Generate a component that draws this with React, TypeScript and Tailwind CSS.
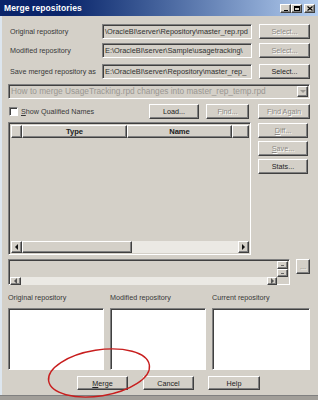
import React from "react";

const raised =
  "border border-t-white border-l-white border-r-[#404040] border-b-[#404040] shadow-[inset_-1px_-1px_0_#808080]";
const sunken =
  "border border-t-[#808080] border-l-[#808080] border-r-white border-b-white shadow-[inset_1px_1px_0_#404040]";
const dis = "text-[#8d8a85] [text-shadow:1px_1px_0_#ffffff]";
const en = "text-[#222222]";

function Btn({
  children,
  size,
  disabled,
}: {
  children: React.ReactNode;
  size: string;
  disabled?: boolean;
}) {
  return (
    <div
      className={`flex items-center justify-center shrink-0 bg-[#d4d0c8] leading-none ${raised} ${size} ${
        disabled ? dis : en
      }`}
    >
      {children}
    </div>
  );
}

function Tri({ dir, color = "#111" }: { dir: "l" | "r" | "d"; color?: string }) {
  const pts =
    dir === "l" ? "3,0 3,6 0,3" : dir === "r" ? "0,0 0,6 3,3" : "0,0 6,0 3,3";
  const w = dir === "d" ? 6 : 3;
  const h = dir === "d" ? 3 : 6;
  return (
    <svg width={w} height={h} viewBox={`0 0 ${w} ${h}`}>
      <polygon points={pts} fill={color} />
    </svg>
  );
}

function Field({ text }: { text: string }) {
  return (
    <div
      className={`w-[150px] h-[15px] shrink-0 bg-[#d4d0c8] ${sunken} flex items-center overflow-hidden whitespace-nowrap pl-[2px] text-[#303030] text-[7.4px]`}
    >
      {text}
    </div>
  );
}

function Row({
  label,
  text,
  selDisabled,
  mt,
}: {
  label: string;
  text: string;
  selDisabled?: boolean;
  mt: string;
}) {
  return (
    <div className={`flex items-center ${mt}`}>
      <div className="w-[92px] ml-[2px] text-[#383838] whitespace-nowrap">{label}</div>
      <Field text={text} />
      <div className="ml-[7px]">
        <Btn size="w-[51px] h-[15px]" disabled={selDisabled}>
          Select...
        </Btn>
      </div>
    </div>
  );
}

export default function App() {
  return (
    <div className="relative w-[318px] h-[400px] overflow-hidden bg-[#d4d0c8] font-['Liberation_Sans',Arial,sans-serif] text-[7.2px] leading-none flex flex-col">
      {/* title bar */}
      <div className="h-[16px] shrink-0 flex items-center bg-gradient-to-r from-[#0a246a] from-20% to-[#b6cff0] pl-[4px] pr-[3px]">
        <div className="text-white font-bold text-[8.5px] tracking-[0.1px]">Merge repositories</div>
        <div className="ml-auto flex items-center">
          <div className={`w-[11px] h-[9px] bg-[#d4d0c8] ${raised} flex items-end justify-center pb-[1px]`}>
            <div className="w-[4px] h-[1px] bg-black" />
          </div>
          <div className={`w-[11px] h-[9px] bg-[#d4d0c8] ${raised} flex items-center justify-center`}>
            <div className="w-[6px] h-[5px] border border-black border-t-2" />
          </div>
          <div className={`ml-[2px] w-[11px] h-[9px] bg-[#d4d0c8] ${raised} flex items-center justify-center`}>
            <svg width="6" height="5" viewBox="0 0 6 5">
              <path d="M0.5 0.5 L5.5 4.5 M5.5 0.5 L0.5 4.5" stroke="#000" strokeWidth="1.2" />
            </svg>
          </div>
        </div>
      </div>

      <div className="flex flex-1">
        <div className="w-[2px] bg-[#dde6ef] shrink-0" />
        <div className="flex-1 flex flex-col pl-[6px] pr-[8px]">
          <Row
            mt="mt-[8px]"
            label="Original repository"
            text="\OracleBI\server\Repository\master_rep.rpd"
            selDisabled
          />
          <Row
            mt="mt-[4px]"
            label="Modified repository"
            text="E:\OracleBI\server\Sample\usagetracking\"
            selDisabled
          />
          <Row
            mt="mt-[6px]"
            label="Save merged repository as"
            text="E:\OracleBI\server\Repository\master_rep_"
          />

          {/* combobox */}
          <div
            className={`mt-[5px] w-[302px] h-[15px] bg-[#d4d0c8] ${sunken} flex items-center pl-[2px] pr-[1px] whitespace-nowrap`}
          >
            <span className="text-[#9a9792] text-[8.3px]">
              How to merge UsageTracking.rpd changes into master_rep_temp.rpd
            </span>
            <div className={`ml-auto w-[11px] h-[11px] bg-[#d4d0c8] ${raised} flex items-center justify-center`}>
              <Tri dir="d" color="#9a9792" />
            </div>
          </div>

          {/* middle section */}
          <div className="mt-[5px] flex">
            <div className="w-[243px] flex flex-col">
              <div className="flex items-center h-[15px]">
                <div className={`ml-[1px] w-[9px] h-[9px] bg-white ${sunken}`} />
                <div className="ml-[3px] text-[#383838]">
                  <span className="underline">S</span>how Qualified Names
                </div>
                <div className="ml-auto">
                  <Btn size="w-[50px] h-[15px]">Load...</Btn>
                </div>
                <div className="ml-[7px] mr-[2px]">
                  <Btn size="w-[43px] h-[15px]" disabled>
                    Find...
                  </Btn>
                </div>
              </div>
              {/* table */}
              <div className={`mt-[3px] h-[133px] ${sunken} bg-[#d4d0c8] flex flex-col p-[1px] pl-[2px] pt-[2px]`}>
                <div className="h-[13px] flex font-bold text-[#222] text-[7.6px]">
                  <div className={`w-[11px] ${raised} bg-[#d4d0c8]`} />
                  <div className={`w-[105px] ${raised} bg-[#d4d0c8] flex items-center justify-center`}>Type</div>
                  <div className={`w-[105px] ${raised} bg-[#d4d0c8] flex items-center justify-center`}>Name</div>
                  <div className={`flex-1 ${raised} bg-[#d4d0c8]`} />
                </div>
                <div className="flex-1" />
                <div className="h-[12px] flex">
                  <div className={`w-[11px] ${raised} bg-[#d4d0c8] flex items-center justify-center`}>
                    <Tri dir="l" />
                  </div>
                  <div className={`w-[110px] ${raised} bg-[#d4d0c8]`} />
                  <div className="flex-1 bg-[#ebe9e4]" />
                  <div className={`w-[11px] ${raised} bg-[#d4d0c8] flex items-center justify-center`}>
                    <Tri dir="r" />
                  </div>
                </div>
              </div>
            </div>
            <div className="ml-[7px] w-[52px] flex flex-col">
              <Btn size="w-[52px] h-[15px]" disabled>
                Find Again
              </Btn>
              <div className="mt-[4px]">
                <Btn size="w-[50px] h-[15px]" disabled>
                  <span className="underline">D</span>iff...
                </Btn>
              </div>
              <div className="mt-[3px]">
                <Btn size="w-[50px] h-[15px]" disabled>
                  <span className="underline">S</span>ave...
                </Btn>
              </div>
              <div className="mt-[3px]">
                <Btn size="w-[50px] h-[15px]">Stats...</Btn>
              </div>
            </div>
          </div>

          {/* second box */}
          <div className="mt-[4px] flex items-start">
            <div className={`w-[282px] h-[26px] ${sunken} bg-[#d4d0c8] flex flex-col pl-[1px] pt-[1px]`}>
              <div className="flex-1 flex">
                <div className="flex-1" />
                <div className="w-[11px] flex flex-col mr-[1px]">
                  <div className={`h-[8px] ${raised} bg-[#d4d0c8] flex items-center justify-center`}>
                    <div className="w-[3px] h-[1px] bg-[#666]" />
                  </div>
                  <div className={`h-[8px] ${raised} bg-[#d4d0c8] flex items-center justify-center`}>
                    <div className="w-[3px] h-[1px] bg-[#666]" />
                  </div>
                </div>
              </div>
              <div className="h-[9px] flex mr-[12px]">
                <div className={`w-[11px] ${raised} bg-[#d4d0c8] flex items-center justify-center`}>
                  <Tri dir="l" color="#555" />
                </div>
                <div className="flex-1 bg-[#ebe9e4]" />
                <div className={`w-[10px] ${raised} bg-[#d4d0c8] flex items-center justify-center`}>
                  <Tri dir="r" color="#555" />
                </div>
              </div>
            </div>
            <div className="ml-[6px]">
              <Btn size="w-[14px] h-[15px]" disabled>
                ...
              </Btn>
            </div>
          </div>

          {/* labels */}
          <div className="mt-[9px] flex text-[#383838]">
            <div className="w-[96px]">Original repository</div>
            <div className="ml-[6px] w-[96px]">Modified repository</div>
            <div className="ml-[6px] w-[98px]">Current repository</div>
          </div>
          <div className="mt-[7px] flex">
            <div className={`w-[96px] h-[62px] bg-white ${sunken}`} />
            <div className={`ml-[6px] w-[96px] h-[62px] bg-white ${sunken}`} />
            <div className={`ml-[6px] w-[98px] h-[62px] bg-white ${sunken}`} />
          </div>

          {/* buttons */}
          <div className="mt-[6px] flex pl-[69px]">
            <Btn size="w-[51px] h-[14px]">
              <span className="underline">M</span>erge
            </Btn>
            <div className="ml-[15px]">
              <Btn size="w-[51px] h-[14px]">Cancel</Btn>
            </div>
            <div className="ml-[14px]">
              <Btn size="w-[52px] h-[14px]">Help</Btn>
            </div>
          </div>
        </div>
      </div>
      <div className="h-[5px] shrink-0 border-t border-[#808080] bg-[#a19e99]" />

      <svg className="absolute left-0 top-0 pointer-events-none" width="318" height="400">
        <ellipse
          cx="99"
          cy="373"
          rx="51"
          ry="23"
          transform="rotate(-9 99 373)"
          fill="none"
          stroke="#c81e1e"
          strokeWidth="1.4"
        />
      </svg>
    </div>
  );
}
